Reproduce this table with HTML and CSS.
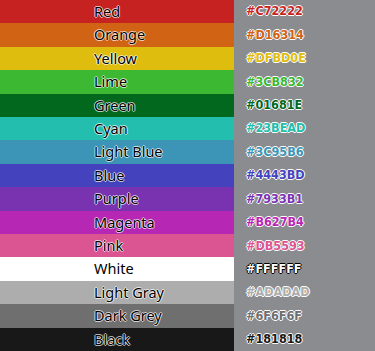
FILE: index.html
```html
<!DOCTYPE html>
<html>
<head>
<meta charset="utf-8">
<link rel="stylesheet" href="styles.css">
</head>
<body>
<div class="table">
  <div class="row"><div class="swatch red"><span class="name">Red</span></div><div class="hex t-red">#C72222</div></div>
  <div class="row"><div class="swatch orange"><span class="name">Orange</span></div><div class="hex t-orange">#D16314</div></div>
  <div class="row"><div class="swatch yellow"><span class="name">Yellow</span></div><div class="hex t-yellow">#DFBD0E</div></div>
  <div class="row"><div class="swatch lime"><span class="name">Lime</span></div><div class="hex t-lime">#3CB832</div></div>
  <div class="row"><div class="swatch green"><span class="name">Green</span></div><div class="hex t-green">#01681E</div></div>
  <div class="row"><div class="swatch cyan"><span class="name">Cyan</span></div><div class="hex t-cyan">#23BEAD</div></div>
  <div class="row"><div class="swatch lightblue"><span class="name">Light Blue</span></div><div class="hex t-lightblue">#3C95B6</div></div>
  <div class="row"><div class="swatch blue"><span class="name">Blue</span></div><div class="hex t-blue">#4443BD</div></div>
  <div class="row"><div class="swatch purple"><span class="name">Purple</span></div><div class="hex t-purple">#7933B1</div></div>
  <div class="row"><div class="swatch magenta"><span class="name">Magenta</span></div><div class="hex t-magenta">#B627B4</div></div>
  <div class="row"><div class="swatch pink"><span class="name">Pink</span></div><div class="hex t-pink">#DB5593</div></div>
  <div class="row"><div class="swatch white"><span class="name">White</span></div><div class="hex t-white">#FFFFFF</div></div>
  <div class="row"><div class="swatch lightgray"><span class="name">Light Gray</span></div><div class="hex t-lightgray">#ADADAD</div></div>
  <div class="row"><div class="swatch darkgrey"><span class="name">Dark Grey</span></div><div class="hex t-darkgrey">#6F6F6F</div></div>
  <div class="row"><div class="swatch black"><span class="name">Black</span></div><div class="hex t-black">#181818</div></div>
</div>
</body>
</html>
```

FILE: styles.css
```css
html, body {
  margin: 0;
  padding: 0;
  width: 375px;
  height: 351px;
  overflow: hidden;
  background: #8a8c8f;
}
.table {
  display: flex;
  flex-direction: column;
  width: 375px;
  height: 351px;
}
.row {
  display: flex;
  flex: 1 1 0;
  min-height: 0;
}
.swatch {
  width: 234px;
  display: flex;
  align-items: center;
  padding-left: 94px;
  box-sizing: border-box;
}
.name {
  font-family: "Noto Sans", sans-serif;
  font-size: 14.5px;
  line-height: 1;
  color: #000;
  margin-top: -1px;
  text-shadow: 1px 0 0 rgba(255,255,255,0.7), -1px 0 0 rgba(255,255,255,0.7),
               0 1px 0 rgba(255,255,255,0.7), 0 -1px 0 rgba(255,255,255,0.7);
}
.hex {
  display: flex;
  align-items: center;
  padding-left: 12px;
  font-family: "DejaVu Sans Condensed", "DejaVu Sans", sans-serif;
  font-weight: bold;
  font-size: 12.5px;
  line-height: 1;
  text-shadow: 1px 0 0 #fff, -1px 0 0 #fff, 0 1px 0 #fff, 0 -1px 0 #fff;
}
.red { background: #C72222; }
.orange { background: #D16314; }
.yellow { background: #DFBD0E; }
.lime { background: #3CB832; }
.green { background: #01681E; }
.cyan { background: #23BEAD; }
.lightblue { background: #3C95B6; }
.blue { background: #4443BD; }
.purple { background: #7933B1; }
.magenta { background: #B627B4; }
.pink { background: #DB5593; }
.white { background: #FFFFFF; }
.lightgray { background: #ADADAD; }
.darkgrey { background: #6F6F6F; }
.black { background: #181818; }
.t-red { color: #C72222; }
.t-orange { color: #D16314; }
.t-yellow { color: #DFBD0E; }
.t-lime { color: #3CB832; }
.t-green { color: #01681E; }
.t-cyan { color: #23BEAD; }
.t-lightblue { color: #3C95B6; }
.t-blue { color: #4443BD; }
.t-purple { color: #7933B1; }
.t-magenta { color: #B627B4; }
.t-pink { color: #DB5593; }
.t-white {
  color: #FFFFFF;
  text-shadow: 1px 0 0 #000, -1px 0 0 #000, 0 1px 0 #000, 0 -1px 0 #000;
}
.t-lightgray { color: #ADADAD; }
.t-darkgrey { color: #6F6F6F; }
.t-black { color: #181818; }
```
